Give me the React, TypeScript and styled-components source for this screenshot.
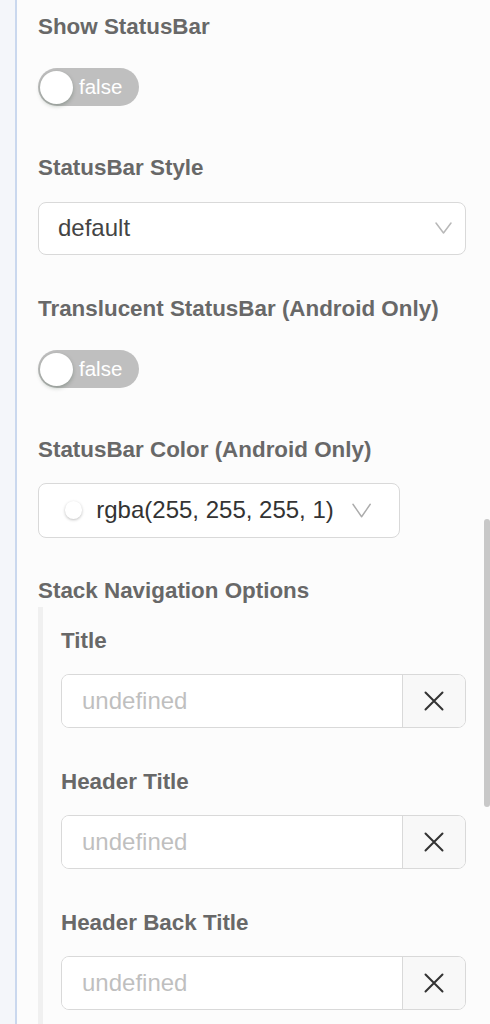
import React from "react";
import styled, { createGlobalStyle } from "styled-components";

const GlobalStyle = createGlobalStyle`
    html, body {
        margin: 0;
        padding: 0;
        background: #fcfcfc;
        font-family: "Liberation Sans", Arial, sans-serif;
    }
    * {
        box-sizing: border-box;
    }
`;

export default function App() {
    return (
        <>
            <GlobalStyle />
            <Page>
                <SideRail />
                <Main>
                    <FormItem>
                        <Label>Show StatusBar</Label>
                        <Control>
                            <Switch label="false" />
                        </Control>
                    </FormItem>

                    <FormItem>
                        <Label>StatusBar Style</Label>
                        <Control>
                            <Select>
                                <SelectValue>default</SelectValue>
                                <Chevron width={17} height={12} color="#b8b8b8" />
                            </Select>
                        </Control>
                    </FormItem>

                    <FormItem>
                        <Label>Translucent StatusBar (Android Only)</Label>
                        <Control>
                            <Switch label="false" />
                        </Control>
                    </FormItem>

                    <FormItem>
                        <Label>StatusBar Color (Android Only)</Label>
                        <Control>
                            <ColorSelect>
                                <Swatch $color="rgba(255, 255, 255, 1)" />
                                <SelectValue>rgba(255, 255, 255, 1)</SelectValue>
                                <Chevron width={20} height={15} color="#acacac" />
                            </ColorSelect>
                        </Control>
                    </FormItem>

                    <FormItem>
                        <Label $tight>Stack Navigation Options</Label>
                        <Nested>
                            {["Title", "Header Title", "Header Back Title"].map((title) => (
                                <FormItem key={title}>
                                    <Label>{title}</Label>
                                    <Control>
                                        <TextField placeholder="undefined" />
                                    </Control>
                                </FormItem>
                            ))}
                        </Nested>
                    </FormItem>
                </Main>
                <ScrollThumb />
            </Page>
        </>
    );
}

function Switch({ label }: { label: string }) {
    return (
        <SwitchTrack>
            <SwitchKnob />
            <SwitchText>{label}</SwitchText>
        </SwitchTrack>
    );
}

function Chevron({ width, height, color }: { width: number; height: number; color: string }) {
    return (
        <svg width={width} height={height} viewBox={`0 0 ${width} ${height}`} fill="none">
            <polyline
                points={`1,1 ${width / 2},${height - 1} ${width - 1},1`}
                stroke={color}
                strokeWidth="1.5"
                strokeLinecap="round"
                strokeLinejoin="round"
            />
        </svg>
    );
}

function TextField({ placeholder }: { placeholder: string }) {
    return (
        <InputGroup>
            <Input placeholder={placeholder} />
            <ClearButton type="button" aria-label="clear">
                <svg width="20" height="20" viewBox="0 0 20 20" fill="none">
                    <path d="M1.5 1.5 L18.5 18.5 M18.5 1.5 L1.5 18.5" stroke="#333" strokeWidth="2" strokeLinecap="round" />
                </svg>
            </ClearButton>
        </InputGroup>
    );
}

const Page = styled.div`
    position: relative;
    display: flex;
    width: 490px;
    min-height: 1024px;
    overflow: hidden;
    background: #fcfcfc;
`;

const SideRail = styled.div`
    flex: 0 0 17px;
    background: #f4f6fa;
    border-right: 2px solid #cad8ee;
`;

const Main = styled.div`
    flex: 1;
    min-width: 0;
    padding: 0 24px 0 21px;
`;

const FormItem = styled.div`
    padding: 10px 0 27px;
`;

const Label = styled.div<{ $tight?: boolean }>`
    font-size: 22.4px;
    line-height: 33px;
    font-weight: 700;
    color: #686868;
    margin-bottom: ${(p) => (p.$tight ? "0" : "17px")};
    white-space: nowrap;
`;

const Control = styled.div`
    display: flex;
    align-items: center;
    height: 54px;
`;

const SwitchTrack = styled.div`
    position: relative;
    display: inline-flex;
    align-items: center;
    height: 38px;
    padding: 0 17px 0 41px;
    border-radius: 19px;
    background: #bfbfbf;
`;

const SwitchKnob = styled.span`
    position: absolute;
    left: 2px;
    top: 3px;
    width: 33px;
    height: 33px;
    border-radius: 50%;
    background: #fff;
    box-shadow: 0 2px 4px rgba(0, 35, 11, 0.25);
`;

const SwitchText = styled.span`
    font-size: 20.5px;
    color: #fff;
`;

const Select = styled.div`
    display: flex;
    align-items: center;
    justify-content: space-between;
    width: 100%;
    height: 53px;
    padding: 0 13px 0 19px;
    background: #fff;
    border: 1px solid #d9d9d9;
    border-radius: 8px;
`;

const SelectValue = styled.span`
    font-size: 24px;
    color: #444;
    white-space: nowrap;
`;

const ColorSelect = styled(Select)`
    width: 362px;
    height: 55px;
    justify-content: flex-start;
    padding: 0 28px 0 26px;

    ${SelectValue} {
        margin: 0 18px 0 14px;
        color: #333;
    }
`;

const Swatch = styled.span<{ $color: string }>`
    width: 18px;
    height: 18px;
    border-radius: 50%;
    background: ${(p) => p.$color};
    box-shadow: 0 1px 3px rgba(0, 0, 0, 0.25);
`;

const Nested = styled.div`
    border-left: 5px solid #f0f0f0;
    padding: 7px 0 0 18px;
`;

const InputGroup = styled.div`
    display: flex;
    width: 100%;
    height: 54px;
    border: 1px solid #d9d9d9;
    border-radius: 8px;
    overflow: hidden;
    background: #fff;
`;

const Input = styled.input`
    flex: 1;
    width: 0;
    min-width: 0;
    border: none;
    outline: none;
    padding: 0 20px;
    font-family: inherit;
    font-size: 24px;
    color: #444;
    background: #fff;

    &::placeholder {
        color: #bfbfbf;
    }
`;

const ClearButton = styled.button`
    display: flex;
    align-items: center;
    justify-content: center;
    flex: 0 0 63px;
    padding: 0;
    border: none;
    border-left: 1px solid #d9d9d9;
    background: #f8f8f8;
    cursor: pointer;
`;

const ScrollThumb = styled.div`
    position: absolute;
    right: 0;
    top: 519px;
    width: 6px;
    height: 288px;
    border-radius: 3px;
    background: #c8c8c8;
`;
